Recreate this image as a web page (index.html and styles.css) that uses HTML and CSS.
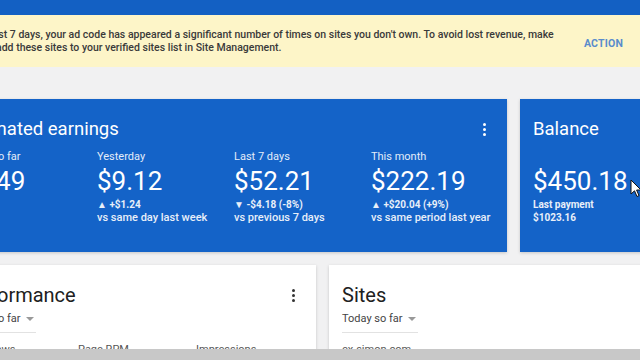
FILE: index.html
```html
<!DOCTYPE html>
<html lang="en">
<head>
  <meta charset="UTF-8">
  <meta name="viewport" content="width=device-width, initial-scale=1.0">
  <title>Home</title>
  <link rel="stylesheet" href="styles.css">
</head>
<body>
  <div class="topbar"></div>

  <div class="banner">
    <p class="banner-text">In the last 7 days, your ad code has appeared a significant number of times on sites you don't own. To avoid lost revenue, make sure to add these sites to your verified sites list in Site Management.</p>
    <a class="banner-action" href="#">ACTION</a>
  </div>

  <div class="viewport">
    <main class="grid">
      <section class="card card-blue earnings">
        <div class="card-head">
          <h2>Estimated earnings</h2>
          <span class="kebab"><i></i><i></i><i></i></span>
        </div>
        <div class="stats">
          <div class="stat">
            <p class="stat-label">Today so far</p>
            <p class="stat-value">$3.49</p>
          </div>
          <div class="stat">
            <p class="stat-label">Yesterday</p>
            <p class="stat-value">$9.12</p>
            <p class="stat-change">&#9650; +$1.24</p>
            <p class="stat-note">vs same day last week</p>
          </div>
          <div class="stat">
            <p class="stat-label">Last 7 days</p>
            <p class="stat-value">$52.21</p>
            <p class="stat-change">&#9660; -$4.18 (-8%)</p>
            <p class="stat-note">vs previous 7 days</p>
          </div>
          <div class="stat">
            <p class="stat-label">This month</p>
            <p class="stat-value">$222.19</p>
            <p class="stat-change">&#9650; +$20.04 (+9%)</p>
            <p class="stat-note">vs same period last year</p>
          </div>
        </div>
      </section>

      <section class="card card-blue balance">
        <div class="card-head">
          <h2>Balance</h2>
        </div>
        <div class="stat">
          <p class="stat-label">&nbsp;</p>
          <p class="stat-value">$450.18</p>
          <p class="stat-change">Last payment</p>
          <p class="stat-change">$1023.16</p>
        </div>
      </section>

      <section class="card card-white performance">
        <div class="card-head">
          <h2>Performance</h2>
          <span class="kebab"><i></i><i></i><i></i></span>
        </div>
        <div class="dropdown">Today so far <span class="caret"></span></div>
        <div class="metrics">
          <span>Page views</span>
          <span>Page RPM</span>
          <span>Impressions</span>
        </div>
      </section>

      <section class="card card-white sites">
        <div class="card-head">
          <h2>Sites</h2>
        </div>
        <div class="dropdown">Today so far <span class="caret"></span></div>
        <div class="metrics">
          <span>ex.simon.com</span>
        </div>
      </section>
    </main>
  </div>

  <div class="bottombar"></div>

  <svg class="cursor" width="12" height="19" viewBox="0 0 12 19">
    <path d="M1 1 L1 15 L4.5 11.8 L7 17.5 L9 16.6 L6.6 11 L11 11 Z" fill="#fff" stroke="#111" stroke-width="1"/>
  </svg>
</body>
</html>
```

FILE: styles.css
```css
body {
  margin: 0;
  height: 360px;
  overflow: hidden;
  display: flex;
  flex-direction: column;
  background: #f1f1f2;
  font-family: Roboto, 'Liberation Sans', sans-serif;
  color: #222;
}
p, h2 {
  margin: 0;
}
.topbar {
  height: 15px;
  flex-shrink: 0;
  background: #1360c3;
}
.banner {
  height: 52px;
  flex-shrink: 0;
  display: flex;
  align-items: center;
  justify-content: space-between;
  background: #fdf5c8;
  padding-right: 17px;
}
.banner-text {
  width: 600px;
  margin-left: -39px;
  font-size: 10.5px;
  line-height: 13px;
  font-weight: 500;
  color: #3a3a3a;
}
.banner-action {
  margin-top: 4px;
  font-size: 10.5px;
  font-weight: 700;
  color: #5a8ccc;
  text-decoration: none;
  letter-spacing: 0.2px;
}
.viewport {
  flex: 1;
  overflow: hidden;
}
.grid {
  display: grid;
  grid-template-columns: repeat(4, 178px);
  grid-auto-rows: 153px;
  gap: 13px;
  margin: 32px 0 0 -53px;
}
.card {
  padding: 18px 20px 0 13px;
  box-shadow: 0 1px 3px rgba(0, 0, 0, 0.18);
}
.card-blue {
  background: #1463c8;
  color: #fff;
}
.card-white {
  background: #fff;
}
.earnings {
  grid-column: span 3;
}
.performance, .sites {
  grid-column: span 2;
}
.card-head {
  display: flex;
  justify-content: space-between;
  align-items: center;
  height: 24px;
}
.card-head h2 {
  font-size: 18.5px;
  font-weight: 400;
}
.card-white .card-head h2 {
  font-size: 20px;
  color: #202020;
}
.kebab {
  display: flex;
  flex-direction: column;
  gap: 2px;
  padding: 0 1px;
}
.kebab i {
  width: 3px;
  height: 3px;
  border-radius: 50%;
  background: #fff;
}
.card-white .kebab i {
  background: #333;
}
.stats {
  display: flex;
}
.stats .stat {
  width: 137px;
  flex-shrink: 0;
}
.stat-label {
  margin-top: 9px;
  font-size: 11px;
  line-height: 14px;
  color: #e3ecf8;
}
.stat-value {
  margin-top: 2px;
  font-size: 26px;
  line-height: 30px;
}
.stat-change {
  font-size: 10px;
  line-height: 12px;
  font-weight: 700;
  color: #e8eff9;
}
.stat-value + .stat-change {
  margin-top: 3px;
}
.stat-note {
  font-size: 11px;
  line-height: 13px;
  font-weight: 500;
  color: #e8eff9;
}
.balance .stat-change + .stat-change {
  margin-top: 1px;
}
.dropdown {
  display: flex;
  align-items: center;
  gap: 5px;
  margin-top: 5px;
  padding-bottom: 6px;
  width: 76px;
  font-size: 11px;
  line-height: 14px;
  color: #444;
  border-bottom: 1px solid #e2e2e2;
}
.caret {
  width: 0;
  height: 0;
  border-left: 4px solid transparent;
  border-right: 4px solid transparent;
  border-top: 4px solid #999;
}
.metrics {
  display: flex;
  margin-top: 10px;
  font-size: 11px;
  line-height: 14px;
  color: #555;
}
.metrics span {
  width: 118px;
  flex-shrink: 0;
}
.bottombar {
  height: 11px;
  flex-shrink: 0;
  background: #c8c8c8;
}
.cursor {
  position: absolute;
  left: 630px;
  top: 179px;
}
```
